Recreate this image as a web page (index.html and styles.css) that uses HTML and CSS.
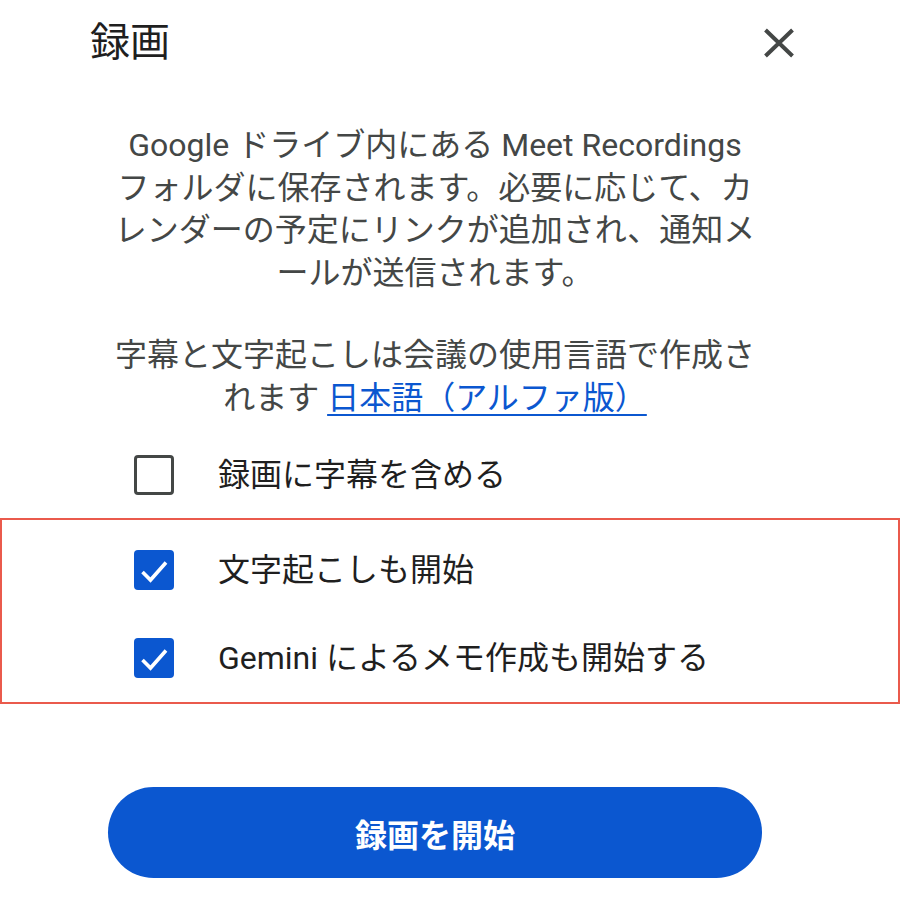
FILE: index.html
```html
<!DOCTYPE html>
<html lang="ja">
<head>
<meta charset="utf-8">
<title>録画</title>
<link rel="stylesheet" href="styles.css">
</head>
<body>
<div class="dialog">
  <header class="head">
    <h1 class="title">録画</h1>
    <button class="close" aria-label="閉じる">
      <svg width="32" height="30" viewBox="0 0 32 30"><path d="M2.5 2 L29.5 28 M29.5 2 L2.5 28" stroke="#444746" stroke-width="4" fill="none"/></svg>
    </button>
  </header>
  <div class="content">
    <p class="desc">Google ドライブ内にある Meet Recordings<br>フォルダに保存されます。必要に応じて、カレンダーの予定にリンクが追加され、通知メールが送信されます。</p>
    <p class="desc lang">字幕と文字起こしは会議の使用言語で作成されます <a class="link" href="#">日本語（アルファ版）</a></p>
    <label class="opt first">
      <span class="box"></span>
      <span class="label">録画に字幕を含める</span>
    </label>
  </div>
  <div class="highlight">
    <label class="opt">
      <span class="box checked"><svg width="40" height="40" viewBox="0 0 40 40"><path d="M8.5 22 L16.5 30 L32 12.5" stroke="#fff" stroke-width="3.6" fill="none"/></svg></span>
      <span class="label">文字起こしも開始</span>
    </label>
    <label class="opt">
      <span class="box checked"><svg width="40" height="40" viewBox="0 0 40 40"><path d="M8.5 22 L16.5 30 L32 12.5" stroke="#fff" stroke-width="3.6" fill="none"/></svg></span>
      <span class="label">Gemini によるメモ作成も開始する</span>
    </label>
  </div>
  <div class="actions">
    <button class="start">録画を開始</button>
  </div>
</div>
</body>
</html>
```
FILE: styles.css
```css
html, body {
  margin: 0;
  padding: 0;
  background: #fff;
}
body {
  font-family: Roboto, "Noto Sans CJK JP", sans-serif;
  color: #1f1f1f;
}
.dialog {
  width: 900px;
  height: 909px;
  overflow: hidden;
}
.head {
  display: flex;
  align-items: center;
  justify-content: space-between;
  padding: 18px 105px 0 90px;
  height: 50px;
}
.title {
  margin: 0;
  font-size: 40px;
  line-height: 50px;
  font-weight: 400;
  color: #1f1f1f;
}
.close {
  border: 0;
  background: none;
  padding: 0;
  width: 32px;
  height: 30px;
  display: block;
}
.close svg { display: block; }
.content {
  padding: 0 138px 0 108px;
}
.desc {
  margin: 56px 0 0;
  font-size: 32px;
  line-height: 42.5px;
  color: #444746;
  text-align: center;
  line-break: loose;
}
.desc.lang {
  margin-top: 40px;
}
.link {
  color: #0b57d0;
  text-decoration: underline;
  text-underline-offset: 5px;
  text-decoration-thickness: 2px;
}
.opt {
  display: flex;
  align-items: center;
  height: 88px;
  padding-left: 26px;
  gap: 44px;
}
.opt.first {
  margin-top: 13px;
  height: 86px;
}
.highlight {
  border: 2px solid #ea5a4c;
  padding: 6px 0 0 106px;
  height: 176px;
  box-sizing: content-box;
}
.box {
  width: 40px;
  height: 40px;
  box-sizing: border-box;
  border: 3.5px solid #444746;
  border-radius: 4px;
  flex: none;
}
.box.checked {
  border: 0;
  background: #0b57d0;
}
.box svg { display: block; }
.label {
  font-size: 32px;
  line-height: 40px;
  color: #1f1f1f;
}
.actions {
  padding: 83px 138px 0 108px;
}
.start {
  display: block;
  width: 100%;
  height: 91px;
  border: 0;
  border-radius: 46px;
  background: #0b57d0;
  color: #fff;
  font-family: Roboto, "Noto Sans CJK JP", sans-serif;
  font-size: 32px;
  font-weight: 700;
}
```
